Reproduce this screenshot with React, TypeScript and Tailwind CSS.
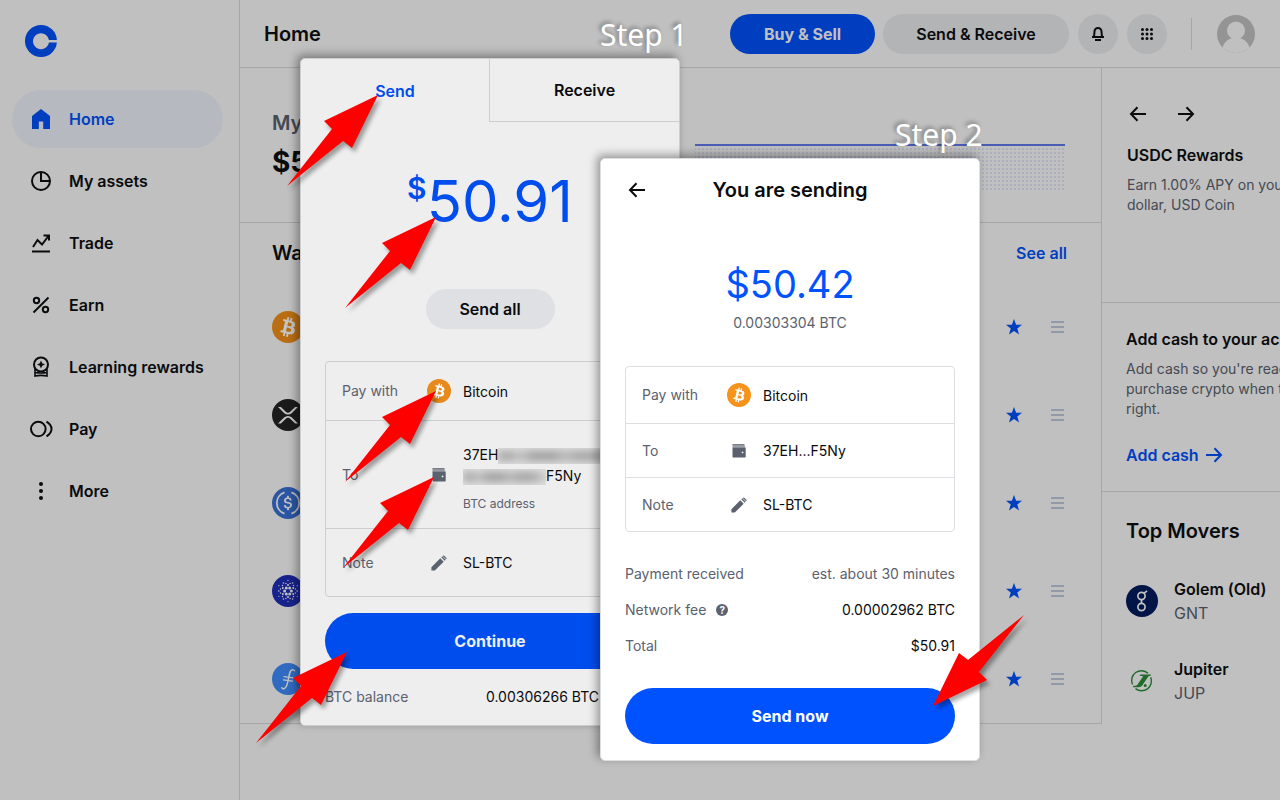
import React from 'react';
import clsx from 'clsx';

const BITCOIN_PATH =
  'M23.189 14.02c.314-2.096-1.283-3.223-3.465-3.975l.708-2.84-1.728-.43-.69 2.765c-.454-.114-.92-.22-1.385-.326l.695-2.783L15.596 6l-.708 2.839c-.376-.086-.746-.17-1.104-.26l.002-.009-2.384-.595-.46 1.846s1.283.294 1.256.312c.7.175.826.638.805 1.006l-.806 3.235c.048.012.11.03.18.057l-.183-.045-1.13 4.532c-.086.212-.303.531-.793.41.018.025-1.256-.313-1.256-.313l-.858 1.978 2.25.561c.418.105.828.215 1.231.318l-.715 2.872 1.727.43.708-2.84c.472.127.93.245 1.378.357l-.706 2.828 1.728.43.715-2.866c2.948.558 5.164.333 6.097-2.333.752-2.146-.037-3.385-1.588-4.192 1.13-.26 1.98-1.003 2.207-2.538zm-3.95 5.538c-.533 2.147-4.148.986-5.32.695l.95-3.805c1.172.293 4.929.872 4.37 3.11zm.535-5.569c-.487 1.953-3.495.96-4.47.717l.86-3.45c.975.243 4.118.696 3.61 2.733z';

const XRP_PATH =
  'M23.07 8h2.89l-6.015 5.957a5.621 5.621 0 01-7.89 0L6.035 8H8.93l4.57 4.523a3.556 3.556 0 004.996 0L23.07 8zM8.895 24.563H6l6.055-5.993a5.621 5.621 0 017.89 0L26 24.562h-2.895L18.5 20a3.556 3.556 0 00-4.996 0l-4.61 4.563z';

const USDC_PATH =
  'M20.022 18.124c0-2.124-1.28-2.852-3.84-3.156-1.828-.243-2.193-.728-2.193-1.578 0-.85.61-1.396 1.828-1.396 1.097 0 1.707.364 2.011 1.275a.458.458 0 00.427.303h.975a.416.416 0 00.427-.425v-.06a3.04 3.04 0 00-2.743-2.489V9.142c0-.243-.183-.425-.487-.486h-.915c-.243 0-.426.182-.487.486v1.396c-1.829.242-2.986 1.456-2.986 2.974 0 2.002 1.218 2.791 3.778 3.095 1.707.303 2.255.668 2.255 1.639 0 .97-.853 1.638-2.011 1.638-1.585 0-2.133-.667-2.316-1.578-.06-.242-.244-.364-.427-.364h-1.036a.416.416 0 00-.426.425v.06c.243 1.518 1.219 2.61 3.23 2.914v1.457c0 .242.183.425.487.485h.915c.243 0 .426-.182.487-.485V21.34c1.829-.303 3.047-1.578 3.047-3.217z';

const BitcoinIcon = ({ className, mark = '#fff' }: { className: string; mark?: string }) => (
  <svg viewBox="0 0 32 32" className={className}>
    <circle cx="16" cy="16" r="16" fill="currentColor" />
    <path d={BITCOIN_PATH} fill={mark} />
  </svg>
);

const XrpIcon = () => (
  <svg viewBox="0 0 32 32" className="size-8">
    <circle cx="16" cy="16" r="16" fill="#1b1b1b" />
    <path d={XRP_PATH} fill="#c4c4c4" />
  </svg>
);

const UsdcIcon = () => (
  <svg viewBox="0 0 32 32" className="size-8">
    <circle cx="16" cy="16" r="16" fill="#2b56a4" />
    <path d={USDC_PATH} fill="#c0c0c0" />
    <path d="M12.5 5.3a11.3 11.3 0 0 0 0 21.4M19.5 5.3a11.3 11.3 0 0 1 0 21.4" fill="none" stroke="#c0c0c0" strokeWidth="1.8" />
  </svg>
);

const CARDANO_RINGS = [
  { count: 6, radius: 3.4, dot: 1.5, turn: 0 },
  { count: 6, radius: 6, dot: 1, turn: 30 },
  { count: 12, radius: 7.8, dot: 0.7, turn: 15 },
  { count: 6, radius: 9.2, dot: 0.8, turn: 0 },
  { count: 6, radius: 10.6, dot: 0.6, turn: 30 },
];

const CardanoIcon = () => (
  <svg viewBox="0 0 32 32" className="size-8">
    <circle cx="16" cy="16" r="16" fill="#17238c" />
    {CARDANO_RINGS.map((ring) =>
      Array.from({ length: ring.count }, (_, i) => {
        const angle = ((i * 360) / ring.count + ring.turn) * (Math.PI / 180);
        return (
          <circle
            key={`${ring.radius}-${i}`}
            cx={16 + ring.radius * Math.cos(angle)}
            cy={16 + ring.radius * Math.sin(angle)}
            r={ring.dot}
            fill="#c0c0c0"
          />
        );
      })
    )}
  </svg>
);

const FilecoinIcon = () => (
  <svg viewBox="0 0 32 32" className="size-8" fill="none" stroke="#c0c0c0" strokeLinecap="round">
    <circle cx="16" cy="16" r="16" fill="#306bc1" stroke="none" />
    <path d="M22.5 7.8c-.8-1.7-3.3-1.6-4.3.8-1.3 3.2-1.9 9.3-3.2 13.200-1 3.400-3.700 4.900-5.200 3" strokeWidth="1.500" />
    <path d="M12 13.600l9 1.300M11.400 16.900l9 1.300" strokeWidth="1.300" />
  </svg>
);

const GolemIcon = () => (
  <svg viewBox="0 0 32 32" className="size-8" fill="none" stroke="#c0c0c0" strokeWidth="1.700">
    <circle cx="16" cy="16" r="16" fill="#001547" stroke="none" />
    <circle cx="15.500" cy="11" r="3.600" />
    <circle cx="15.500" cy="22" r="3.600" />
    <path d="M15.500 14.600v3.800M18 8.400l3-2.600" />
  </svg>
);

const JupiterIcon = () => (
  <svg viewBox="0 0 32 32" className="size-8">
    <path d="M6.500 19.500a9.800 9.800 0 0 1 15.500-11.300M24.700 12.200a9.800 9.800 0 0 1-15.200 11.400" fill="none" stroke="#216b2b" strokeWidth="1.400" />
    <path d="M14.500 9.600h10.700l-1 1.400h-1.500l-6.300 9.300c-.9 1.300-2.200 1.900-3.900 1.900H6.700l.9-1.400h1.900c.8 0 1.300-.3 1.800-1l5.400-7.800c.4-.6.200-1-.5-1h-2.600z" fill="#216b2b" />
    <circle cx="19.200" cy="20.600" r="1.500" fill="#216b2b" />
  </svg>
);

const LogoIcon = () => (
  <svg viewBox="0 0 32 32" className="size-8">
    <path
      fill="#003ec0"
      d="M16 0a16 16 0 1 0 15.900 17.500H23.900a8 8 0 1 1 0-2.500h8A16 16 0 0 0 16 0z"
    />
  </svg>
);

const ArrowIcon = ({ className }: { className?: string }) => (
  <svg viewBox="0 0 18 16" className={clsx('h-4 w-[18px]', className)} fill="none" stroke="currentColor" strokeWidth="2">
    <path d="M17 8H2.500M8.500 1.300L2 8l6.500 6.700" />
  </svg>
);

const WalletIcon = () => (
  <svg viewBox="0 0 16 16" className="size-4 text-[#5b616e]">
    <path d="M1.500 1.200h12v1.300h-12z" fill="currentColor" />
    <path d="M1.500 2.500h12.400v2.200H1.500z" fill="currentColor" opacity=".6" />
    <path d="M1.500 4.600h13.200v9.200q0 .6-.6.6H2.100q-.6 0-.6-.6z" fill="currentColor" />
    <path d="M11.600 7.900l.4 1.100 1.100.4-1.100.4-.4 1.100-.4-1.100-1.100-.4 1.100-.4z" fill="#fff" />
  </svg>
);

const PencilIcon = () => (
  <svg viewBox="0 0 16 16" className="size-4 text-[#5b616e]" fill="currentColor">
    <path d="M.4 15.600v-3.400L9.300 3.300l3.400 3.400-8.900 8.900zM10.300 2.300l1-1 3.400 3.400-1 1zM12 .7q.6-.6 1.300 0l2 2q.7.700 0 1.300l-.2.300L11.800 1z" />
  </svg>
);

const stroke = { fill: 'none', stroke: 'currentColor', strokeWidth: 2 };

const navItems = [
  {
    label: 'Home',
    icon: <path d="M12 2l9 7v13h-6.800v-7.500H9.800V22H3V9z" fill="currentColor" />,
  },
  {
    label: 'My assets',
    icon: (
      <g {...stroke}>
        <circle cx="12" cy="12" r="9" />
        <path d="M12 3v9h9" />
      </g>
    ),
  },
  {
    label: 'Trade',
    icon: (
      <g {...stroke}>
        <path d="M3 20.500h18M4 16l4.500-7 4.500 4.500L19.500 5M14.500 4.500h5.500v5" />
      </g>
    ),
  },
  {
    label: 'Earn',
    icon: (
      <g {...stroke}>
        <circle cx="7.500" cy="7.500" r="2.700" />
        <circle cx="16.500" cy="16.500" r="2.700" />
        <path d="M19.500 4.500l-15 15" />
      </g>
    ),
  },
  {
    label: 'Learning rewards',
    icon: (
      <g>
        <circle cx="12" cy="9.500" r="7" {...stroke} />
        <path d="M6 14v7q6-1.200 12 0v-7M6 17.500q6 1 12 0" fill="none" stroke="currentColor" strokeWidth="1.600" />
        <path d="M12 5.500l1.200 2.800 2.800 1.200-2.800 1.200L12 13.500l-1.200-2.800L8 9.500l2.800-1.200z" fill="currentColor" />
      </g>
    ),
  },
  {
    label: 'Pay',
    icon: (
      <g {...stroke}>
        <circle cx="9.300" cy="12" r="7.300" />
        <path d="M17.500 4.700q5 3 5 7.300t-5 7.300" />
      </g>
    ),
  },
  {
    label: 'More',
    icon: (
      <g fill="currentColor">
        <circle cx="12" cy="5" r="2" />
        <circle cx="12" cy="12" r="2" />
        <circle cx="12" cy="19" r="2" />
      </g>
    ),
  },
];

const Sidebar = () => (
  <nav className="w-60 shrink-0 border-r border-[#a6a6a8] pl-3 pr-4 pt-[25px]">
    <a href="#" aria-label="Coinbase" className="ml-[13px] block w-8">
      <LogoIcon />
    </a>
    <ul className="mt-[33px] flex flex-col gap-1">
      {navItems.map((item, i) => (
        <li key={item.label}>
          <a
            href="#"
            className={clsx(
              'flex h-[58px] items-center gap-4 rounded-full pl-[17px] font-semibold',
              i === 0 && 'bg-[#b6b9bf] text-[#003ec0]'
            )}
          >
            <svg viewBox="0 0 24 24" className="size-6">
              {item.icon}
            </svg>
            {item.label}
          </a>
        </li>
      ))}
    </ul>
  </nav>
);

const Header = () => (
  <header className="flex h-[68px] shrink-0 items-center border-b border-[#a6a6a8] pl-6 pr-[25px]">
    <h1 className="flex-1 text-xl font-semibold">Home</h1>
    <button className="h-10 w-[145px] rounded-full bg-[#003ec0] font-bold text-[#c0c0c0]">Buy &amp; Sell</button>
    <button className="ml-2 h-10 w-[186px] rounded-full bg-[#b3b4b6] font-semibold">Send &amp; Receive</button>
    <button aria-label="Notifications" className="ml-[9px] flex size-10 items-center justify-center rounded-full bg-[#b3b4b6]">
      <svg viewBox="0 0 16 16" className="size-4" {...stroke}>
        <path d="M2 11h12M4 11l.5-5.500a3.500 3.500 0 0 1 7 0L12 11M5 14h6" />
      </svg>
    </button>
    <button aria-label="Apps" className="ml-[9px] flex size-10 items-center justify-center rounded-full bg-[#b3b4b6]">
      <svg viewBox="0 0 12 12" className="size-3" fill="currentColor">
        {[1.5, 6, 10.5].map((y) => [1.5, 6, 10.5].map((x) => <circle key={`${x}-${y}`} cx={x} cy={y} r="1.500" />))}
      </svg>
    </button>
    <div className="ml-6 h-8 w-px bg-[#a6a6a8]" />
    <button aria-label="Account" className="ml-[25px] size-[38px] overflow-hidden rounded-full bg-[#949494]">
      <svg viewBox="0 0 38 38" fill="#c0c0c0">
        <circle cx="19" cy="15.500" r="9" />
        <path d="M5 34c2-8 8-11.500 14-11.500S31 26 33 34v4H5z" />
      </svg>
    </button>
  </header>
);

const coins = [
  { name: 'Bitcoin', icon: <BitcoinIcon className="size-8 text-[#ba6e14]" mark="#c4c4c4" /> },
  { name: 'XRP', icon: <XrpIcon /> },
  { name: 'USD Coin', icon: <UsdcIcon /> },
  { name: 'Cardano', icon: <CardanoIcon /> },
  { name: 'Filecoin', icon: <FilecoinIcon /> },
];

const Watchlist = () => (
  <section>
    <div className="flex h-[60px] items-center justify-between pl-8 pr-[34px]">
      <h2 className="text-xl font-semibold">Watchlist</h2>
      <a href="#" className="font-semibold text-[#003ec0]">
        See all
      </a>
    </div>
    <ul>
      {coins.map((coin) => (
        <li key={coin.name} className="flex h-[88px] items-center pl-8 pr-[37px]">
          <div className="flex-1">{coin.icon}</div>
          <button aria-label={`Unfollow ${coin.name}`} className="mr-[29px] text-[#003ec0]">
            <svg viewBox="0 0 16 16" className="size-4" fill="currentColor">
              <path d="M8 0l2.100 5.700 5.900.1-4.700 3.700 1.700 5.900L8 12l-5 3.400 1.700-5.900L0 5.800l5.900-.1z" />
            </svg>
          </button>
          <button aria-label={`Reorder ${coin.name}`} className="text-[#9299a8]">
            <svg viewBox="0 0 13 12" className="h-3 w-[13px]" {...stroke}>
              <path d="M0 1h13M0 6h13M0 11h13" />
            </svg>
          </button>
        </li>
      ))}
    </ul>
  </section>
);

const Aside = () => (
  <aside className="w-[178px] shrink-0 overflow-hidden whitespace-nowrap">
    <section className="h-[235px] border-b border-[#a6a6a8] pl-[25px] pt-[38px]">
      <div className="flex gap-[30px] pl-0.5">
        <button aria-label="Previous">
          <ArrowIcon />
        </button>
        <button aria-label="Next">
          <ArrowIcon className="rotate-180" />
        </button>
      </div>
      <h3 className="mt-[21px] font-semibold leading-6">USDC Rewards</h3>
      <p className="mt-2 text-sm leading-5 text-[#454953]">
        Earn 1.00% APY on your
        <br />
        dollar, USD Coin
      </p>
    </section>
    <section className="h-[189px] border-b border-[#a6a6a8] pl-6 pt-6">
      <h3 className="font-semibold leading-6">Add cash to your account</h3>
      <p className="mt-2 text-sm leading-5 text-[#454953]">
        Add cash so you're ready to
        <br />
        purchase crypto when the time is
        <br />
        right.
      </p>
      <a href="#" className="mt-6 flex items-center gap-1.5 font-semibold text-[#003ec0]">
        Add cash
        <ArrowIcon className="rotate-180" />
      </a>
    </section>
    <section className="pl-6 pt-[25px]">
      <h2 className="text-xl font-semibold">Top Movers</h2>
      {[
        { name: 'Golem (Old)', code: 'GNT', icon: <GolemIcon /> },
        { name: 'Jupiter', code: 'JUP', icon: <JupiterIcon /> },
      ].map((mover) => (
        <div key={mover.code} className="mt-8 flex h-12 items-center gap-4">
          {mover.icon}
          <div className="leading-6">
            <div className="font-semibold">{mover.name}</div>
            <div className="text-[#454953]">{mover.code}</div>
          </div>
        </div>
      ))}
    </section>
  </aside>
);

interface DetailRowProps {
  label: string;
  icon: React.ReactNode;
  className: string;
  children: React.ReactNode;
}

const DetailRow = ({ label, icon, className, children }: DetailRowProps) => (
  <div className={clsx('flex items-center px-4', className)}>
    <dt className="w-[85px] text-[#5b616e]">{label}</dt>
    <dd className="flex items-center gap-3">
      <span className="flex w-6 justify-center">{icon}</span>
      <div className="leading-[21px]">{children}</div>
    </dd>
  </div>
);

// Smudge over the private part of the address
const Redacted = ({ className }: { className: string }) => (
  <span className={clsx('inline-flex h-4 items-center overflow-hidden bg-[#e2e2e2] align-middle', className)}>
    <span className="flex h-2.5 w-full blur-[4px]">
      <span className="flex-1 bg-[#a4a4a4]" />
      <span className="flex-1 bg-[#b8b8b8]" />
      <span className="flex-2 bg-[#9c9c9c]" />
      <span className="flex-1 bg-[#b0b0b0]" />
      <span className="flex-2 bg-[#a0a0a0]" />
      <span className="flex-1 bg-[#bcbcbc]" />
    </span>
  </span>
);

const SendModal = () => (
  <div className="absolute left-[300px] top-[58px] w-[380px] rounded-[5px] border border-[#cdced0] bg-[#eee] shadow-[-3px_-3px_10px_rgba(0,0,0,0.38)]">
    <div className="flex h-[63px]">
      <button className="flex-1 font-semibold text-[#004dee]">Send</button>
      <button className="w-[190px] border-b border-l border-[#cdced0] font-semibold">Receive</button>
    </div>
    <div className="px-6 pb-[18px]">
      <div className="mt-[45px] flex h-[68px] justify-center text-[#004dee]">
        <span className="mt-[3px] text-[30px] font-semibold leading-9">$</span>
        <span className="text-[58px] leading-[68px]">50.91</span>
      </div>
      <button className="mx-auto mt-[54px] block h-10 w-[129px] rounded-full bg-[#dfe0e4] font-semibold">Send all</button>
      <dl className="mt-8 divide-y divide-[#cdced0] rounded border border-[#cdced0] text-sm">
        <DetailRow label="Pay with" icon={<BitcoinIcon className="size-6 text-[#e78a1b]" />} className="h-[59px]">
          Bitcoin
        </DetailRow>
        <DetailRow label="To" icon={<WalletIcon />} className="h-[108px]">
          <div className="whitespace-nowrap pt-2">
            37EH
            <Redacted className="w-[120px]" />
          </div>
          <div className="whitespace-nowrap">
            <Redacted className="w-[83px]" />
            F5Ny
          </div>
          <div className="mt-2 text-xs leading-5 text-[#5b616e]">BTC address</div>
        </DetailRow>
        <DetailRow label="Note" icon={<PencilIcon />} className="h-[67px]">
          SL-BTC
        </DetailRow>
      </dl>
      <button className="mt-4 h-14 w-full rounded-full bg-[#004dee] font-bold text-[#eee]">Continue</button>
      <div className="mt-[18px] flex items-center justify-between pr-14 text-sm">
        <span className="text-[#5b616e]">BTC balance</span>
        <span>0.00306266 BTC</span>
      </div>
    </div>
  </div>
);

const ConfirmModal = () => (
  <div className="absolute left-[600px] top-[158px] w-[380px] rounded-[5px] border border-[#dcdee2] bg-white px-6 pb-4 shadow-[-3px_-3px_10px_rgba(0,0,0,0.38)]">
    <div className="flex h-[62px] items-center">
      <button aria-label="Back" className="w-6 pl-[3px]">
        <ArrowIcon />
      </button>
      <h2 className="flex-1 pr-6 text-center text-xl font-semibold">You are sending</h2>
    </div>
    <div className="mt-[38px] text-center text-[38px] leading-[50px] text-[#0052ff]">$50.42</div>
    <div className="mt-1 text-center text-sm text-[#5b616e]">0.00303304 BTC</div>
    <dl className="mt-[33px] divide-y divide-[#dcdee2] rounded border border-[#dcdee2] text-sm">
      <DetailRow label="Pay with" icon={<BitcoinIcon className="size-6 text-[#f7931a]" />} className="h-[57px]">
        Bitcoin
      </DetailRow>
      <DetailRow label="To" icon={<WalletIcon />} className="h-[54px]">
        37EH...F5Ny
      </DetailRow>
      <DetailRow label="Note" icon={<PencilIcon />} className="h-[53px]">
        SL-BTC
      </DetailRow>
    </dl>
    <dl className="mt-6 text-sm">
      <div className="flex h-9 items-center justify-between text-[#5b616e]">
        <dt>Payment received</dt>
        <dd>est. about 30 minutes</dd>
      </div>
      <div className="flex h-9 items-center justify-between">
        <dt className="flex items-center gap-2.5 text-[#5b616e]">
          Network fee
          <button aria-label="About network fee" className="size-3 rounded-full bg-[#5b616e] text-[10px] font-bold leading-3 text-white">
            ?
          </button>
        </dt>
        <dd>0.00002962 BTC</dd>
      </div>
      <div className="flex h-9 items-center justify-between">
        <dt className="text-[#5b616e]">Total</dt>
        <dd>$50.91</dd>
      </div>
    </dl>
    <button className="mt-6 h-14 w-full rounded-full bg-[#0052ff] font-bold text-white">Send now</button>
  </div>
);

const Pointer = ({ className }: { className: string }) => (
  <svg
    viewBox="0 0 91 91"
    className={clsx('pointer-events-none absolute size-[91px] overflow-visible', className)}
  >
    <path d="M91 0L37 26l8 8L0 91l56-45 9 7z" fill="#f00" />
  </svg>
);

const StepLabel = ({ className, children }: { className: string; children: React.ReactNode }) => (
  <div
    className={clsx(
      "absolute whitespace-nowrap font-['Noto_Sans','Open_Sans',sans-serif] text-[30px] leading-10 text-white [text-shadow:-2px_-2px_4px_rgba(0,0,0,0.4)]",
      className
    )}
  >
    {children}
  </div>
);

export default function App() {
  return (
    <div className="relative flex min-h-screen overflow-hidden bg-[#c0c0c0] font-['Inter',sans-serif] text-[#0a0b0d]">
      <Sidebar />
      <div className="flex min-w-0 flex-1 flex-col">
        <Header />
        <div className="flex items-start">
          <main className="min-w-0 flex-1 border-b border-r border-[#a6a6a8]">
            <section className="flex h-[155px] justify-between border-b border-[#a6a6a8] pl-8 pr-9">
              <div className="pt-10">
                <h2 className="text-xl font-semibold leading-[30px] text-[#454953]">My balance</h2>
                <p className="mt-1 text-[28px] font-bold leading-10">$50.91</p>
              </div>
              <svg viewBox="0 0 370 48" className="mt-[76px] h-12 w-[370px]">
                <defs>
                  <pattern id="dots" width="4" height="4" patternUnits="userSpaceOnUse">
                    <rect x="3" width="2" height="2" fill="#acaebd" />
                    <rect x="-1" width="2" height="2" fill="#acaebd" />
                  </pattern>
                </defs>
                <rect y="4" width="370" height="43" fill="url(#dots)" />
                <path d="M0 1h370" stroke="#4a5cb4" strokeWidth="2" />
              </svg>
            </section>
            <Watchlist />
          </main>
          <Aside />
        </div>
      </div>

      <SendModal />
      <StepLabel className="left-[600px] top-[15px]">Step 1</StepLabel>
      <ConfirmModal />
      <StepLabel className="left-[895px] top-[115px]">Step 2</StepLabel>

      {/* shadow sits on the group so it falls the same way for the turned pointer */}
      <div className="pointer-events-none absolute inset-0 drop-shadow-[3px_4px_2px_rgba(0,0,0,0.35)]">
        <Pointer className="left-[287px] top-[95px]" />
        <Pointer className="left-[345px] top-[217px]" />
        <Pointer className="left-[345px] top-[391px]" />
        <Pointer className="left-[343px] top-[477px]" />
        <Pointer className="left-[256px] top-[652px]" />
        <Pointer className="left-[933px] top-[615px] rotate-180" />
      </div>
    </div>
  );
}
